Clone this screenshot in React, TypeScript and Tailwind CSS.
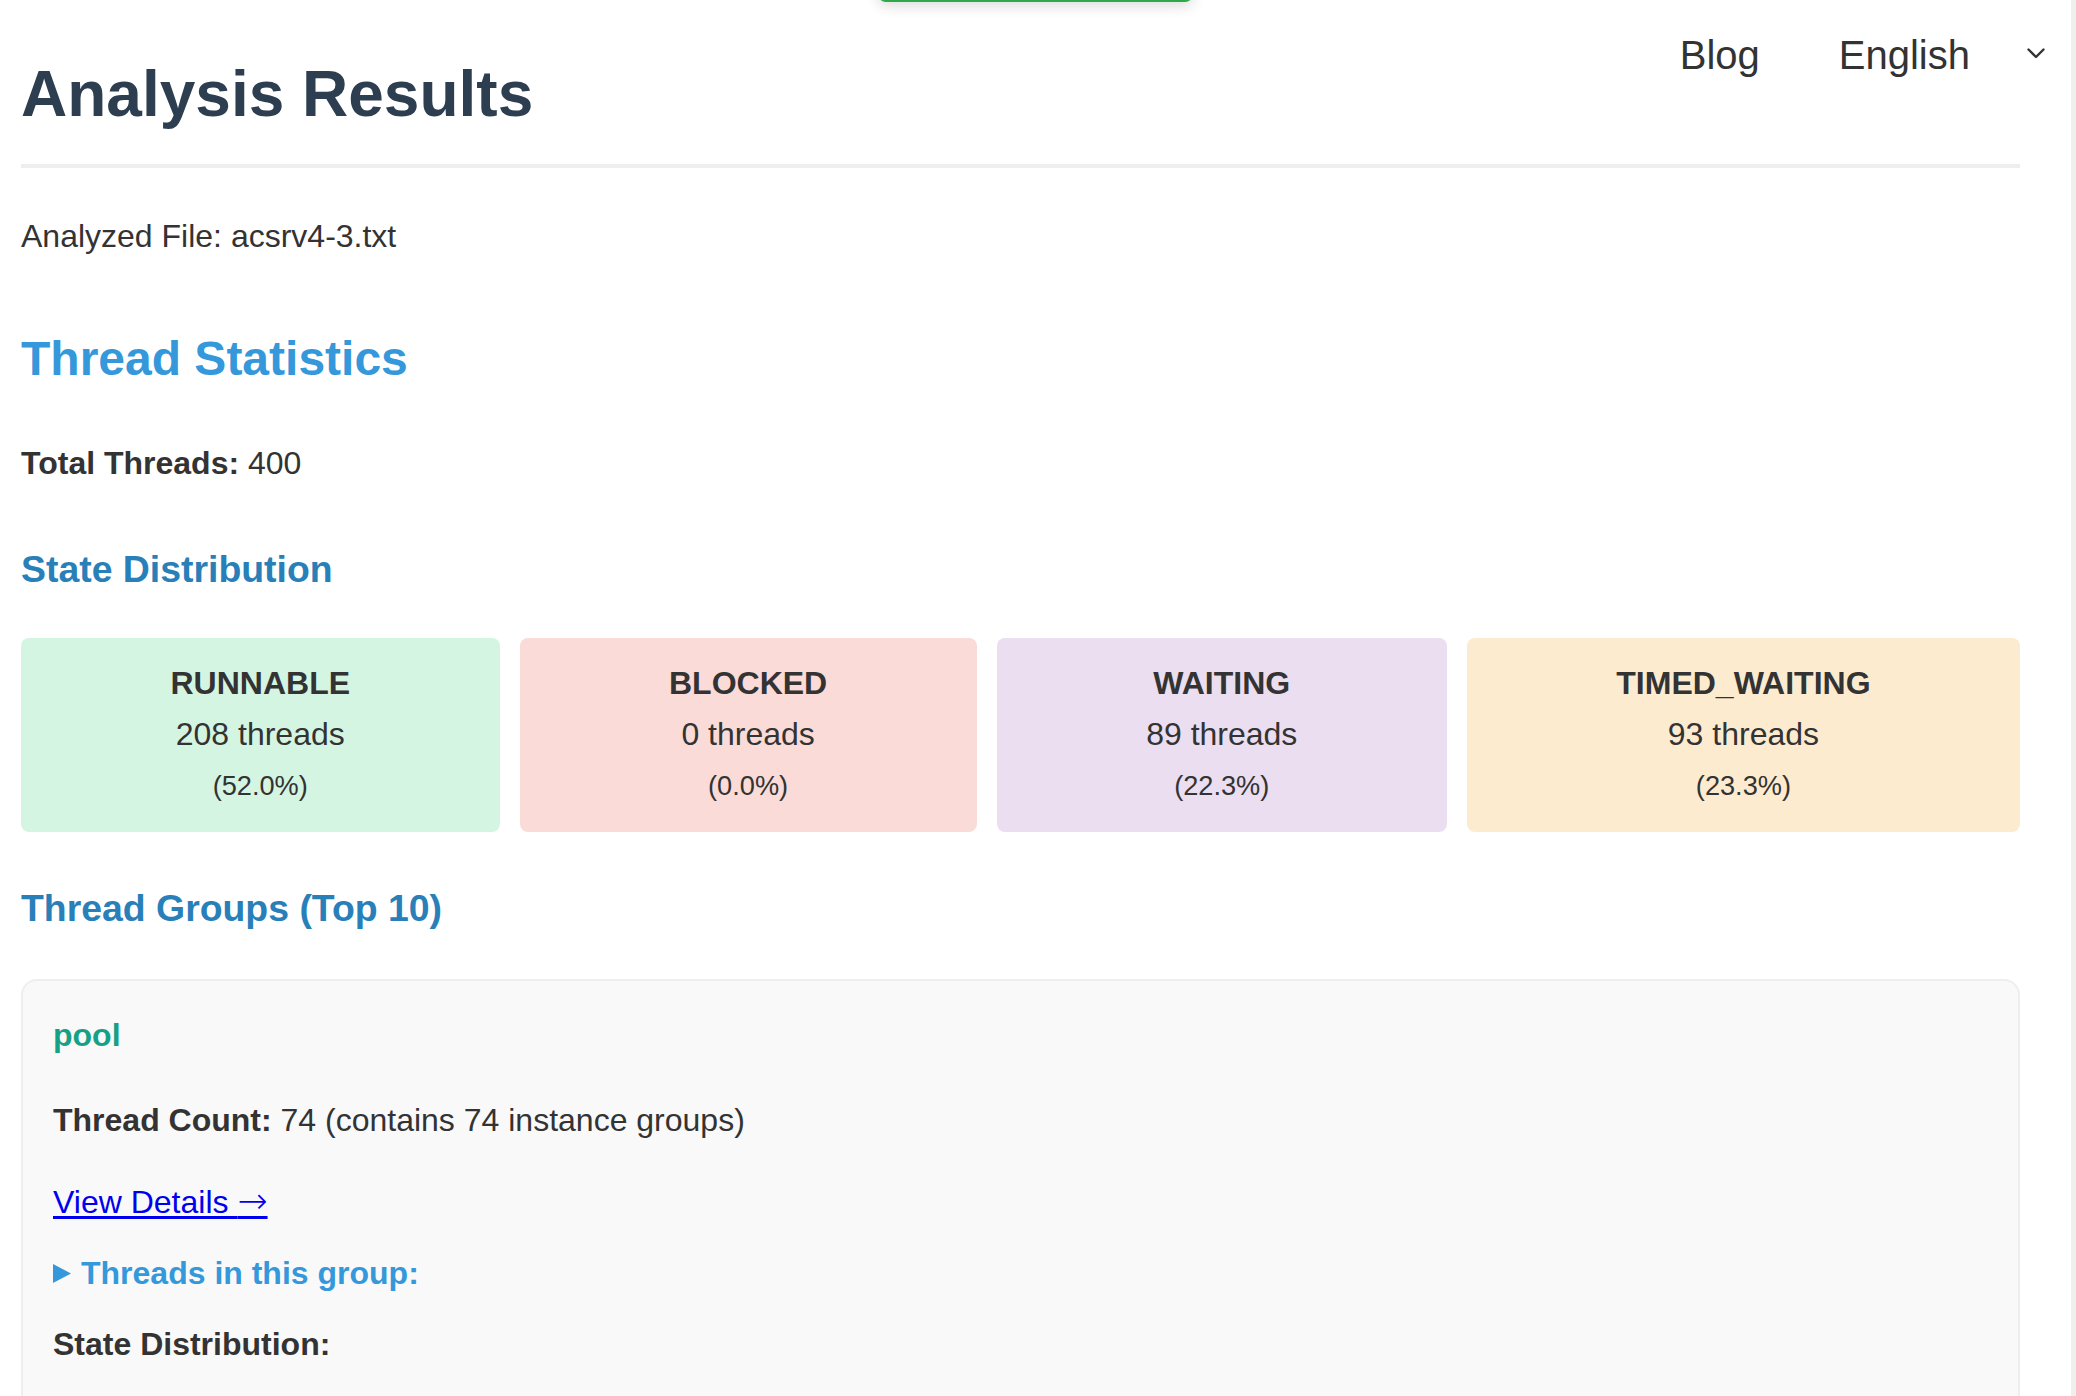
import React from 'react';

type StateCard = {
  name: string;
  count: number;
  percent: string;
  bg: string;
};

const STATES: StateCard[] = [
  { name: 'RUNNABLE', count: 208, percent: '52.0%', bg: 'bg-[#d5f5e3]' },
  { name: 'BLOCKED', count: 0, percent: '0.0%', bg: 'bg-[#fadbd8]' },
  { name: 'WAITING', count: 89, percent: '22.3%', bg: 'bg-[#ebdef0]' },
  { name: 'TIMED_WAITING', count: 93, percent: '23.3%', bg: 'bg-[#fdebd0]' },
];

const Chevron = () => (
  <svg width="18" height="11" viewBox="0 0 18 11" fill="none" className="mb-[3px]">
    <path d="M1.5 1.5 L9 9 L16.5 1.5" stroke="#333" strokeWidth="2.4" strokeLinecap="round" strokeLinejoin="round" />
  </svg>
);

const Triangle = () => (
  <svg width="18" height="19" viewBox="0 0 18 19" className="shrink-0">
    <path d="M0 0 L18 9.5 L0 19 Z" fill="#3498db" />
  </svg>
);

export default function App() {
  return (
    <div className="relative flex min-h-screen bg-white font-['Liberation_Sans',Arial,sans-serif] text-[#333]">
      {/* toast sliding out at the top */}
      <div className="absolute left-[878px] top-[-80px] h-[82px] w-[315px] rounded-[8px] border-b-[4px] border-[#2ea84a] bg-white shadow-[0_4px_14px_rgba(0,0,0,0.14)]" />

      <main className="flex-1 pl-[21px]">
        <header className="flex w-[2024px] items-start justify-between">
          <h1 className="pt-[56px] text-[64px] font-bold leading-[76px] text-[#2c3e50]">Analysis Results</h1>
          <nav className="flex items-center gap-[79px] pt-[23px] text-[40px] leading-[64px] text-[#333]">
            <a href="#" className="no-underline">Blog</a>
            <div className="flex items-center gap-[57px]">
              <span>English</span>
              <Chevron />
            </div>
          </nav>
        </header>
        <div className="mt-[32px] h-[4px] w-[1999px] bg-[#eeeeee]" />

        <p className="mt-[43px] text-[32px] leading-[51.2px]">Analyzed File: acsrv4-3.txt</p>

        <h2 className="mt-[68px] text-[48px] font-bold leading-[57.6px] text-[#3498db]">Thread Statistics</h2>

        <p className="mt-[50px] text-[32px] leading-[51.2px]">
          <strong>Total Threads:</strong> 400
        </p>

        <h3 className="mt-[58px] text-[37.4px] font-bold leading-[45px] text-[#2980b9]">State Distribution</h3>

        <div className="mt-[46px] flex w-[1999px] gap-[20px]">
          {STATES.map((s) => (
            <div key={s.name} className={`flex-auto rounded-[8px] px-[30px] py-[20px] text-center text-[32px] leading-[51.2px] ${s.bg}`}>
              <div className="font-bold">{s.name}</div>
              <div>{s.count} threads</div>
              <div className="text-[27.2px]">({s.percent})</div>
            </div>
          ))}
        </div>

        <h3 className="mt-[54px] text-[37.4px] font-bold leading-[45px] text-[#2980b9]">Thread Groups (Top 10)</h3>

        <section className="mt-[48px] w-[1999px] rounded-[16px] border-2 border-[#eeeeee] bg-[#f9f9f9] px-[30px] pb-[30px] pt-[29px] text-[32px] leading-[51.2px]">
          <h4 className="font-bold text-[#16a085]">pool</h4>
          <p className="mt-[34px]">
            <strong>Thread Count:</strong> 74 (contains 74 instance groups)
          </p>
          <p className="mt-[31px] h-[51.2px]">
            <a href="#" className="text-[#0000ee] underline decoration-[2.5px] underline-offset-[3px]">
              View Details <span className="font-['DejaVu_Sans',sans-serif] text-[36px] font-extralight leading-none">→</span>
            </a>
          </p>
          <details className="mt-[20px]">
            <summary className="flex list-none items-center gap-[10px] font-bold text-[#3498db] [&::-webkit-details-marker]:hidden">
              <Triangle />
              Threads in this group:
            </summary>
          </details>
          <p className="mt-[20px] font-bold">State Distribution:</p>
          <div className="h-[60px]" />
        </section>
      </main>

      <div className="w-[5px] shrink-0 bg-[#efefef]" />
    </div>
  );
}
